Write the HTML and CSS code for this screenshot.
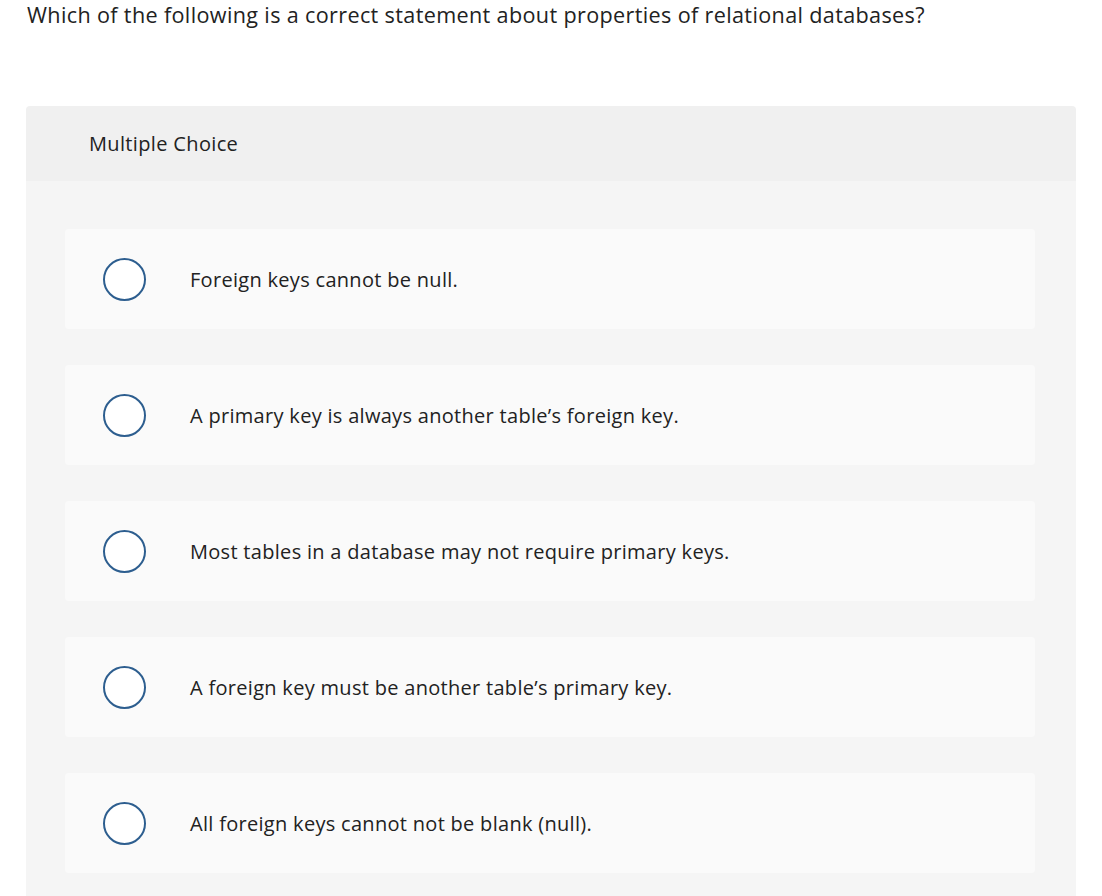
FILE: index.html
```html
<!DOCTYPE html>
<html lang="en">
<head>
<meta charset="utf-8">
<title>Multiple Choice</title>
<link rel="stylesheet" href="styles.css">
</head>
<body>
<div class="page">
  <p class="question">Which of the following is a correct statement about properties of relational databases?</p>
  <section class="panel">
    <header class="panel-head">Multiple Choice</header>
    <div class="panel-body">
      <div class="option"><span class="radio"></span><span class="label">Foreign keys cannot be null.</span></div>
      <div class="option"><span class="radio"></span><span class="label">A primary key is always another table’s foreign key.</span></div>
      <div class="option"><span class="radio"></span><span class="label">Most tables in a database may not require primary keys.</span></div>
      <div class="option"><span class="radio"></span><span class="label">A foreign key must be another table’s primary key.</span></div>
      <div class="option"><span class="radio"></span><span class="label">All foreign keys cannot not be blank (null).</span></div>
    </div>
  </section>
</div>
</body>
</html>
```
FILE: styles.css
```css
html, body {
  margin: 0;
  padding: 0;
  background: #ffffff;
}
body {
  font-family: "Open Sans", "Liberation Sans", sans-serif;
  color: #222222;
}
.page {
  padding: 0 26px 0 26px;
}
.question {
  margin: 0;
  padding: 0 0 0 1px;
  height: 30px;
  font-size: 21.6px;
  line-height: 30px;
  letter-spacing: 0.35px;
  color: #222222;
}
.panel {
  margin-top: 76px;
  border-radius: 4px 4px 0 0;
  overflow: hidden;
}
.panel-head {
  background: #f0f0f0;
  height: 75px;
  display: flex;
  align-items: center;
  padding-left: 63px;
  font-size: 20px;
  letter-spacing: 0.35px;
  color: #222222;
}
.panel-body {
  background: #f5f5f5;
  padding: 48px 41px 40px 39px;
  display: flex;
  flex-direction: column;
  gap: 36px;
}
.option {
  background: #fafafa;
  border-radius: 4px;
  height: 100px;
  display: flex;
  align-items: center;
  padding-left: 38px;
}
.radio {
  width: 39px;
  height: 39px;
  border: 2px solid #2d5e8f;
  border-radius: 50%;
  background: #ffffff;
  flex: none;
}
.label {
  margin-left: 44px;
  font-size: 20px;
  letter-spacing: 0.3px;
  color: #222222;
}
```
